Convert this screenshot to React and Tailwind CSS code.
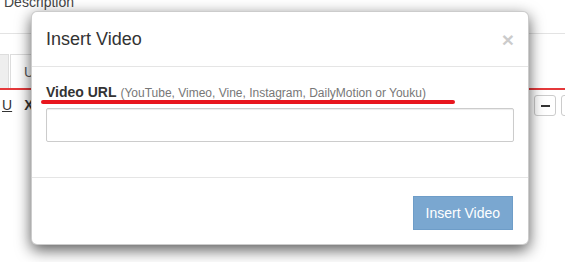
export default function App() {
  return (
    <div className="relative w-[565px] h-[262px] overflow-hidden bg-white font-['Liberation_Sans',Arial,sans-serif] text-[#333]">
      {/* page behind the dialog */}
      <div className="mt-[-8px] pl-[4px] text-[14px] leading-[20px] text-[#444]">Description</div>
      <div className="mt-[21px] border-t border-[#e3e3e3]" />
      <div className="mt-[20px] flex h-[34px] items-stretch">
        <div className="w-[9px] border-r border-t border-[#ddd] bg-[#eee]" />
        <div className="ml-[1px] w-[60px] border border-b-0 border-[#ddd] pl-[13px] pt-[7px] text-[14px] text-[#555]">
          URL
        </div>
      </div>
      <div className="h-[2px] bg-[#e5393b]" />
      <div className="mt-[5px] flex h-[21px] justify-between">
        <div className="ml-[2px] flex items-center gap-[12px] text-[14px] text-[#333]">
          <span className="underline">U</span>
          <span className="font-bold">X</span>
        </div>
        <div className="mr-[-18px] flex gap-[5px]">
          <div className="flex w-[22px] items-center justify-center rounded-[3px] border border-[#ccc]">
            <div className="h-[2px] w-[9px] bg-[#333]" />
          </div>
          <div className="w-[22px] rounded-[3px] border border-[#ccc]" />
        </div>
      </div>

      {/* dialog */}
      <div className="absolute left-[31px] top-[11px] w-[498px] rounded-[6px] border border-[rgba(0,0,0,0.2)] bg-white shadow-[0_5px_15px_rgba(0,0,0,0.65)]">
        <div className="flex h-[55px] items-center justify-between border-b border-[#e5e5e5] px-[14px]">
          <h4 className="text-[18px] leading-[26px] text-[#333]">Insert Video</h4>
          <span className="text-[21px] font-bold leading-none text-[#000] opacity-20">×</span>
        </div>
        <div className="px-[14px] pt-[15px] pb-[35px]">
          <label className="block text-[14px] leading-[20px]">
            <span className="font-bold text-[#333]">Video URL</span>{' '}
            <span className="text-[12px] text-[#777]">(YouTube, Vimeo, Vine, Instagram, DailyMotion or Youku)</span>
          </label>
          <input
            type="text"
            className="mt-[5px] block h-[34px] w-full rounded-[2px] border border-[#ccc] px-[12px] shadow-[inset_0_1px_1px_rgba(0,0,0,0.075)] outline-none"
          />
        </div>
        <div className="flex justify-end border-t border-[#e5e5e5] px-[15px] pt-[18px] pb-[14px]">
          <button className="h-[34px] border border-[#6e9dc8] bg-[#7aa7d0] px-[12px] text-[14px] text-white">
            Insert Video
          </button>
        </div>
        {/* red annotation stroke */}
        <div className="absolute left-[9px] top-[88px] h-[4px] w-[414px] rounded-full bg-[#e8161e]" />
      </div>
    </div>
  );
}
